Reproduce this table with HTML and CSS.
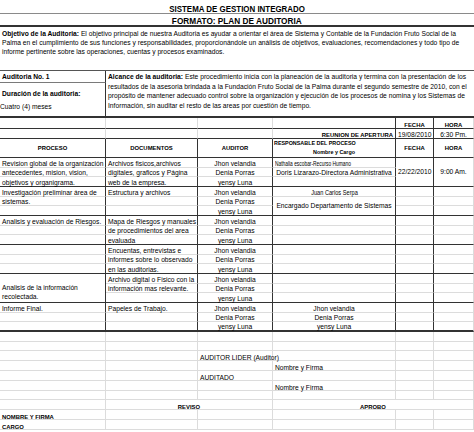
FILE: index.html
```html
<!DOCTYPE html>
<html lang="es">
<head>
<meta charset="utf-8">
<title>Plan de Auditoria</title>
<link rel="stylesheet" href="styles.css">
</head>
<body>
<table class="sheet">
  <colgroup>
    <col class="w1"><col class="w2"><col class="w3"><col class="w4"><col class="w5"><col class="w6">
  </colgroup>
  <tbody>
    <tr class="h-t1"><td colspan="6" class="title t1"><span class="tt">SISTEMA DE GESTION INTEGRADO</span></td></tr>
    <tr class="h-t2"><td colspan="6" class="title t2"><span class="tt">FORMATO: PLAN DE AUDITORIA</span></td></tr>
    <tr class="h-obj"><td colspan="6" class="para obj"><b>Objetivo de la Auditoria:</b> El objetivo principal de nuestra Auditoria es ayudar a orientar el área de Sistema y Contable de la Fundación Fruto Social de la<br>Palma en el cumplimiento de sus funciones y responsabilidades, proporcionándole un análisis de objetivos, evaluaciones, recomendaciones y todo tipo de<br>informe pertinente sobre las operaciones, cuentas y procesos examinados.</td></tr>
    <tr class="h-a1">
      <td class="R lab1"><b>Auditoria No. 1</b></td>
      <td colspan="5" rowspan="3" class="para alc"><b>Alcance de la auditoria:</b> Este procedimiento inicia con la planeación de la auditoria y termina con la presentación de los<br>resultados de la asesoria brindada a la Fundación Fruto Social de la Palma durante el segundo semestre de 2010, con el<br>propósito de mantener adecuado control sobre la organización y ejecución de los procesos de nomina y los Sistemas de<br>Información, sin auditar el resto de las areas por cuestión de tiempo.</td>
    </tr>
    <tr class="h-a2"><td class="R noline bot"><b>Duración de la auditoria:</b></td></tr>
    <tr class="h-a3"><td class="R thick top nopad">Cuatro (4) meses</td></tr>
    <tr class="h-f d-bot">
      <td></td><td></td><td></td><td class="R"></td>
      <td class="R hb c">FECHA</td><td class="hb c">HORA</td>
    </tr>
    <tr class="h-r d-bot">
      <td></td><td></td><td></td><td class="R hb r reu">REUNION DE APERTURA</td>
      <td class="R c">19/08/2010</td><td class="c">6:30 Pm.</td>
    </tr>
    <tr class="h-hd d-bot">
      <td class="R hb c hm">PROCESO</td>
      <td class="R hb c hm">DOCUMENTOS</td>
      <td class="R hb c hm">AUDITOR</td>
      <td class="R hb resp hm"><div class="rl">RESPONSABLE DEL PROCESO</div><div class="rc">Nombre y Cargo</div></td>
      <td class="R hb c hm">FECHA</td>
      <td class="hb c hm">HORA</td>
    </tr>

    <tr class="dr">
      <td class="R">Revision global de la organización</td>
      <td class="R">Archivos fisicos,archivos</td>
      <td class="R c">Jhon velandia</td>
      <td class="R"><span class="cond">Nathalia escobar-Recurso Humano</span></td>
      <td class="R c gbot mm" rowspan="3">22/22/2010</td>
      <td class="c gbot mm" rowspan="3">9:00 Am.</td>
    </tr>
    <tr class="dr">
      <td class="R">antecedentes, mision, vision,</td>
      <td class="R">digitales, graficos y Página</td>
      <td class="R c">Denia Porras</td>
      <td class="R c">Doris Lizarazo-Directora Administrativa</td>
    </tr>
    <tr class="dr gb">
      <td class="R">objetivos y organigrama.</td>
      <td class="R">web de la empresa.</td>
      <td class="R c">yensy Luna</td>
      <td class="R"></td>
    </tr>

    <tr class="dr">
      <td class="R">Investigación preliminar área de</td>
      <td class="R">Estructura y archivos</td>
      <td class="R c">Jhon velandia</td>
      <td class="R c"><span class="cond2">Juan Carlos Serpa</span></td>
      <td class="R"></td><td></td>
    </tr>
    <tr class="dr">
      <td class="R">sistemas.</td>
      <td class="R"></td>
      <td class="R c">Denia Porras</td>
      <td class="R c gbot mm" rowspan="2">Encargado Departamento de Sistemas</td>
      <td class="R"></td><td></td>
    </tr>
    <tr class="dr gb">
      <td class="R"></td>
      <td class="R"></td>
      <td class="R c">yensy Luna</td>
      <td class="R"></td><td></td>
    </tr>

    <tr class="dr">
      <td class="R">Analisis y evaluación de Riesgos.</td>
      <td class="R">Mapa de Riesgos y manuales</td>
      <td class="R c">Jhon velandia</td>
      <td class="R"></td><td class="R"></td><td></td>
    </tr>
    <tr class="dr">
      <td class="R"></td>
      <td class="R">de procedimientos del area</td>
      <td class="R c">Denia Porras</td>
      <td class="R"></td><td class="R"></td><td></td>
    </tr>
    <tr class="dr gb">
      <td class="R"></td>
      <td class="R">evaluada</td>
      <td class="R c">yensy Luna</td>
      <td class="R"></td><td class="R"></td><td></td>
    </tr>

    <tr class="dr">
      <td class="R"></td>
      <td class="R">Encuentas, entrevistas e</td>
      <td class="R c">Jhon velandia</td>
      <td class="R"></td><td class="R"></td><td></td>
    </tr>
    <tr class="dr">
      <td class="R"></td>
      <td class="R">informes sobre lo observado</td>
      <td class="R c">Denia Porras</td>
      <td class="R"></td><td class="R"></td><td></td>
    </tr>
    <tr class="dr gb">
      <td class="R"></td>
      <td class="R">en las auditorias.</td>
      <td class="R c">yensy Luna</td>
      <td class="R"></td><td class="R"></td><td></td>
    </tr>

    <tr class="dr">
      <td class="R gbot wrap2" rowspan="3">Analisis de la información<br>recolectada.</td>
      <td class="R">Archivo digital o Fisico con la</td>
      <td class="R c">Jhon velandia</td>
      <td class="R"></td><td class="R"></td><td></td>
    </tr>
    <tr class="dr">
      <td class="R">información mas relevante.</td>
      <td class="R c">Denia Porras</td>
      <td class="R"></td><td class="R"></td><td></td>
    </tr>
    <tr class="dr gb">
      <td class="R"></td>
      <td class="R c">yensy Luna</td>
      <td class="R"></td><td class="R"></td><td></td>
    </tr>

    <tr class="dr">
      <td class="R">Informe Final.</td>
      <td class="R">Papeles de Trabajo.</td>
      <td class="R c">Jhon velandia</td>
      <td class="R c">Jhon velandia</td>
      <td class="R"></td><td></td>
    </tr>
    <tr class="dr">
      <td class="R"></td>
      <td class="R"></td>
      <td class="R c">Denia Porras</td>
      <td class="R c">Denia Porras</td>
      <td class="R"></td><td></td>
    </tr>
    <tr class="dr gb last">
      <td class="R"></td>
      <td class="R"></td>
      <td class="R c">yensy Luna</td>
      <td class="R c">yensy Luna</td>
      <td class="R"></td><td></td>
    </tr>

    <tr class="br"><td></td><td></td><td></td><td></td><td></td><td></td></tr>
    <tr class="br"><td></td><td></td><td></td><td></td><td></td><td></td></tr>
    <tr class="br"><td></td><td></td><td>AUDITOR LIDER (Auditor)</td><td></td><td></td><td></td></tr>
    <tr class="br"><td></td><td></td><td></td><td>Nombre y Firma</td><td></td><td></td></tr>
    <tr class="br"><td></td><td></td><td>AUDITADO</td><td></td><td></td><td></td></tr>
    <tr class="br"><td></td><td></td><td></td><td>Nombre y Firma</td><td></td><td></td></tr>
    <tr class="br"><td></td><td></td><td></td><td></td><td></td><td></td></tr>
    <tr class="br"><td></td><td colspan="2" class="hb c">REVISO</td><td colspan="3" class="hb c">APROBO</td></tr>
    <tr class="br"><td class="hb">NOMBRE Y FIRMA</td><td></td><td></td><td></td><td></td><td></td></tr>
    <tr class="br"><td class="hb">CARGO</td><td></td><td></td><td></td><td></td><td></td></tr>
  </tbody>
</table>
</body>
</html>
```

FILE: styles.css
```css
* { box-sizing: border-box; }
html, body { margin: 0; padding: 0; background: #ffffff; }
body {
  font-family: "Liberation Sans", Arial, sans-serif;
  font-size: 6.7px;
  color: #000000;
}

.sheet {
  width: 474px;
  table-layout: fixed;
  border-collapse: separate;
  border-spacing: 0;
}
.w1 { width: 106px; }
.w2 { width: 92px; }
.w3 { width: 75px; }
.w4 { width: 123px; }
.w5 { width: 38px; }
.w6 { width: 40px; }

.sheet td {
  padding: 0 2px;
  border-right: 1px solid #dcdcdc;
  border-bottom: 1px solid #dcdcdc;
  white-space: nowrap;
  vertical-align: bottom;
  line-height: 8px;
  overflow: visible;
}

/* titles */
.h-t1 { height: 14px; }
.h-t2 { height: 13px; }
.sheet td.title {
  text-align: center;
  font-weight: bold;
  border-right: none;
  padding-bottom: 0;
}
.tt {
  display: inline-block;
  transform: scaleX(0.88);
  transform-origin: center center;
}
.sheet td.t1 { font-size: 9px; line-height: 5px; border-bottom: 1px solid #8a8a8a; padding-bottom: 1px; }
.sheet td.t1 .tt { line-height: 5px; }
.sheet td.t2 { font-size: 9.4px; line-height: 8px; border-bottom: 2px solid #333333; }
.sheet td.t2 .tt { line-height: 8px; }

/* paragraphs */
.h-obj { height: 44px; }
.sheet td.para {
  vertical-align: top;
  line-height: 9.6px;
  border-right: none;
}
.sheet td.obj { padding-top: 1.5px; line-height: 9.2px; border-bottom: 1px solid #555555; }
.sheet td.alc { padding-top: 1px; border-bottom: 2px solid #333333; }

.h-a1 { height: 12px; }
.h-a2 { height: 17px; }
.h-a3 { height: 18px; }
.sheet td.lab1 { border-bottom: 1px solid #7a7a7a; vertical-align: middle; }
.sheet td.noline { border-bottom: none; }
.sheet td.bot { vertical-align: bottom; padding-bottom: 2px; }
.sheet td.top { vertical-align: top; padding-top: 3px; }
.sheet td.nopad { padding-left: 0; }
.sheet td.thick { border-bottom: 2px solid #333333; }

.h-f { height: 11px; }
.h-r { height: 10px; }
.h-f td, .h-r td { line-height: 6px; }
.h-hd { height: 19px; }
.d-bot td { border-bottom-color: #333333; }

.sheet td.R { border-right-color: #333333; }
.sheet td.c { text-align: center; }
.sheet td.r { text-align: right; }
.sheet td.hb { font-weight: bold; font-size: 5.9px; }
.sheet td.reu { font-size: 5.9px; }
.sheet td.hm, .sheet td.mm { vertical-align: middle; line-height: 8px; }

.sheet td.resp { padding: 0 1px; }
.rl { text-align: left; font-size: 5.4px; line-height: 9px; }
.rc { text-align: center; font-size: 5.4px; line-height: 9px; }

.cond {
  display: inline-block;
  font-size: 6.4px;
  transform: scaleX(0.76);
  transform-origin: left center;
}
.cond2 {
  display: inline-block;
  font-size: 6.4px;
  transform: scaleX(0.88);
  transform-origin: center center;
}

/* data rows */
.dr { height: 9.67px; }
.dr td { line-height: 6px; }
.sheet .gb td, .sheet td.gbot { border-bottom-color: #333333; }
.sheet .last td { border-bottom: 2px solid #333333; }
.sheet td.wrap2 { padding-bottom: 1px; line-height: 9px; }

/* bottom rows */
.br { height: 9.8px; }
.br td { line-height: 4px; }
```
